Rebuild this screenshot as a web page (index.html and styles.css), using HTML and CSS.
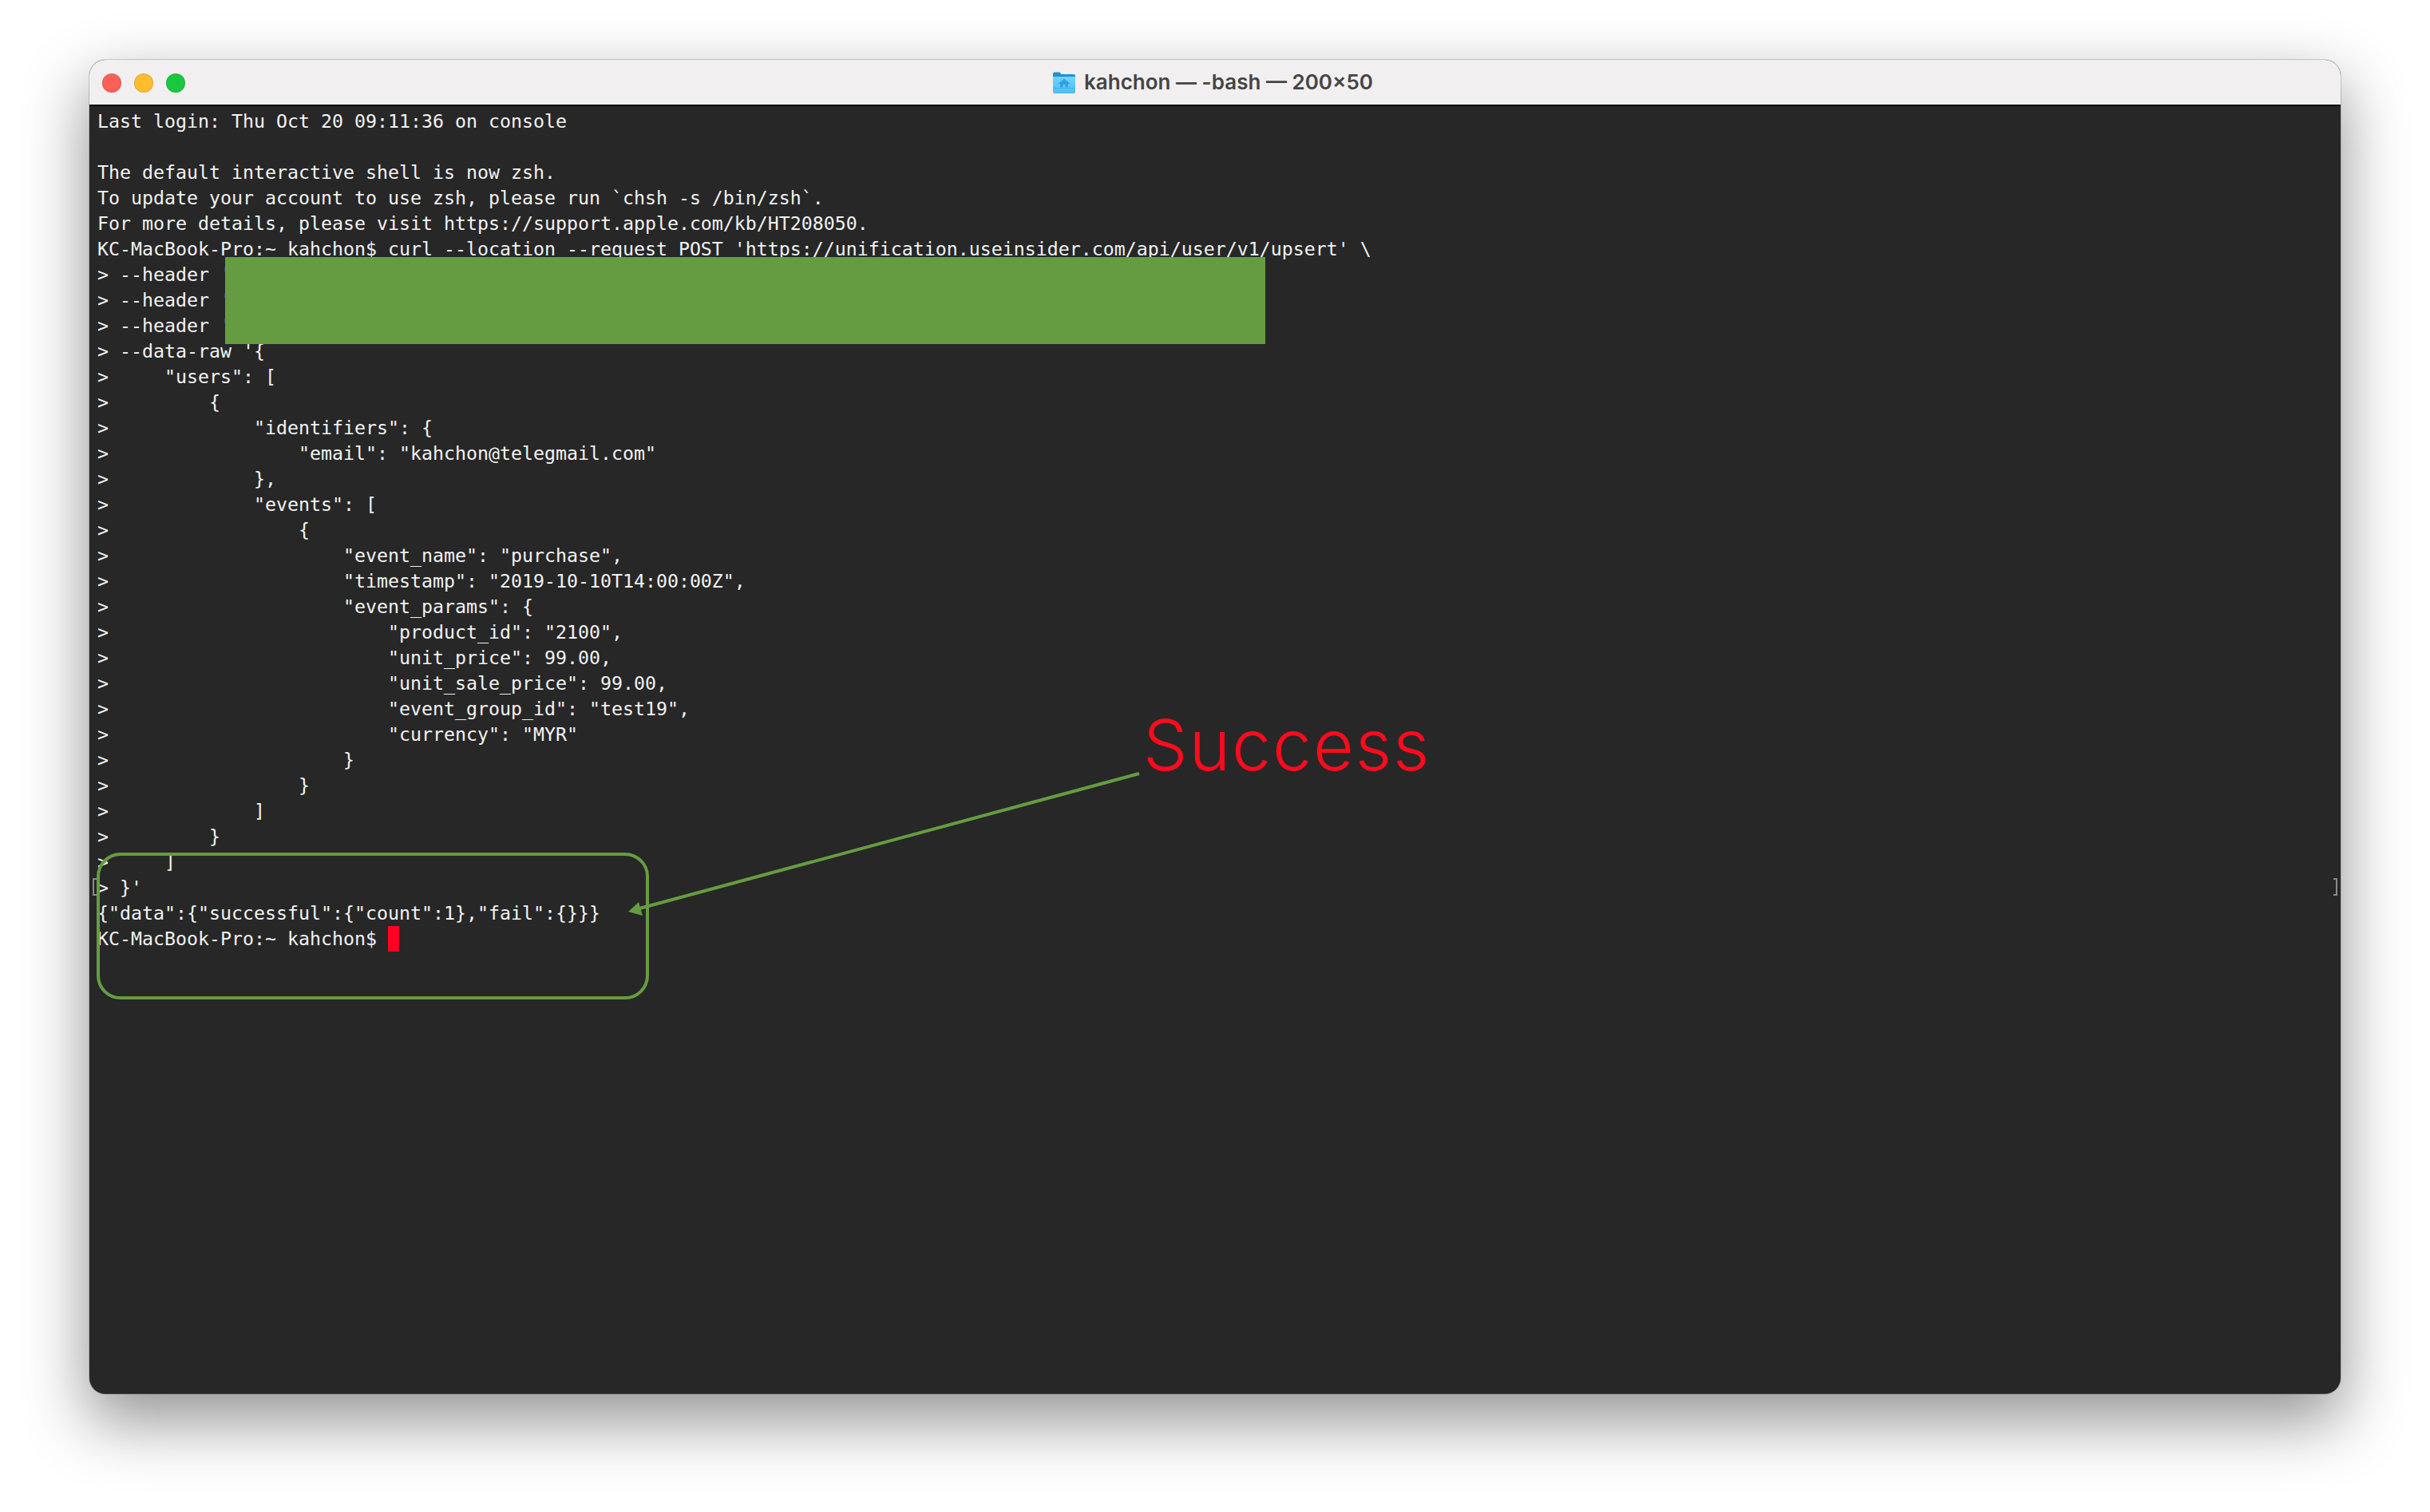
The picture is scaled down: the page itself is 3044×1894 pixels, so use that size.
FILE: index.html
```html
<!DOCTYPE html>
<html lang="en">
<head>
<meta charset="utf-8">
<title>kahchon — -bash — 200×50</title>
<link rel="stylesheet" href="styles.css">
</head>
<body>
<main class="window">
  <header class="titlebar">
    <div class="lights">
      <span class="light red"></span>
      <span class="light yellow"></span>
      <span class="light green"></span>
    </div>
    <div class="title">
      <svg class="folder" viewBox="0 0 28 27" aria-hidden="true">
        <defs>
          <linearGradient id="folderFill" x1="0" y1="0" x2="0" y2="1">
            <stop offset="0" stop-color="#74d3fb"/>
            <stop offset="1" stop-color="#4fbcf2"/>
          </linearGradient>
        </defs>
        <path d="M0 2.500a2 2 0 0 1 2-2h6.500l2 2.500H26a2 2 0 0 1 2 2V8H0z" fill="#1d8fdc"/>
        <path d="M0 6h28v19a2 2 0 0 1-2 2H2a2 2 0 0 1-2-2z" fill="url(#folderFill)"/>
        <path d="M0 20.500h28" stroke="#3fb2ec" stroke-width="1"/>
        <path d="M14 8.500l-7.500 6.500h2.500v4.500h3.500v-3.500h3v3.500H19V15h2.500z" fill="#2aa3e6"/>
      </svg>
      <span class="title-text">kahchon — -bash — 200×50</span>
    </div>
  </header>
  <section class="terminal">
<pre class="output">Last login: Thu Oct 20 09:11:36 on console

The default interactive shell is now zsh.
To update your account to use zsh, please run `chsh -s /bin/zsh`.
For more details, please visit https://support.apple.com/kb/HT208050.
KC-MacBook-Pro:~ kahchon$ curl --location --request POST 'https://unification.useinsider.com/api/user/v1/upsert' \
&gt; --header '
&gt; --header '
&gt; --header '
&gt; --data-raw '{
&gt;     "users": [
&gt;         {
&gt;             "identifiers": {
&gt;                 "email": "kahchon@telegmail.com"
&gt;             },
&gt;             "events": [
&gt;                 {
&gt;                     "event_name": "purchase",
&gt;                     "timestamp": "2019-10-10T14:00:00Z",
&gt;                     "event_params": {
&gt;                         "product_id": "2100",
&gt;                         "unit_price": 99.00,
&gt;                         "unit_sale_price": 99.00,
&gt;                         "event_group_id": "test19",
&gt;                         "currency": "MYR"
&gt;                     }
&gt;                 }
&gt;             ]
&gt;         }
&gt;     ]
&gt; }'
{"data":{"successful":{"count":1},"fail":{}}}
KC-MacBook-Pro:~ kahchon$ <span class="cursor"> </span></pre>
    <span class="mark mark-left"></span>
    <span class="mark mark-right"></span>
    <div class="redaction"></div>
    <div class="callout-box"></div>
    <svg class="arrow" viewBox="0 0 660 190" aria-hidden="true">
      <path d="M645 2 L19 171" stroke="#669c41" stroke-width="4" fill="none"/>
      <path d="M5 175 L18 163 L23 180 Z" fill="#669c41"/>
    </svg>
    <span class="success">Success</span>
  </section>
</main>
</body>
</html>
```
FILE: styles.css
```css
* { box-sizing: border-box; }
html, body { margin: 0; height: 100%; background: #fff; }
body { padding: 75px 112px 148px; overflow: hidden; }

.window {
  height: 1671px;
  display: flex;
  flex-direction: column;
  border-radius: 20px;
  overflow: visible;
  background: #272727;
  box-shadow: 0 32px 80px 3px rgba(0, 0, 0, .42), 0 0 0 1px rgba(0, 0, 0, .16);
}

.titlebar {
  position: relative;
  height: 58px;
  flex: none;
  display: flex;
  align-items: center;
  justify-content: center;
  background: #f1eff0;
  border-radius: 20px 20px 0 0;
  border-bottom: 2px solid #000;
}
.lights {
  position: absolute;
  left: 16px;
  top: 17px;
  display: flex;
  gap: 16px;
}
.light { width: 24px; height: 24px; border-radius: 50%; border: 1px solid rgba(0, 0, 0, .1); }
.red { background: #fe5f57; }
.yellow { background: #febc2e; }
.green { background: #1ac840; }

.title { display: flex; align-items: center; gap: 11px; margin-right: 5px; }
.folder { width: 28px; height: 27px; display: block; }
.title-text {
  font-family: Inter, "Liberation Sans", sans-serif;
  font-weight: 600;
  font-size: 26px;
  line-height: 30px;
  color: #454545;
}

.terminal {
  position: relative;
  flex: 1;
  padding: 3px 0 0 10px;
  border-radius: 0 0 20px 20px;
}
.output {
  margin: 0;
  font-family: "DejaVu Sans Mono", monospace;
  font-size: 23.25px;
  line-height: 32px;
  color: #f2f2f2;
}
.cursor { display: inline-block; width: 14px; height: 32px; vertical-align: top; background: #ff0022; }

.mark {
  position: absolute;
  top: 967px;
  width: 5px;
  height: 22px;
  border: 2px solid #8a8a8a;
}
.mark-left { left: 4px; border-right: 0; }
.mark-right { right: 4px; border-left: 0; }

.redaction {
  position: absolute;
  left: 170px;
  top: 189px;
  width: 1303px;
  height: 109px;
  background: #669c41;
}
.callout-box {
  position: absolute;
  left: 9px;
  top: 935px;
  width: 692px;
  height: 184px;
  border: 4px solid #669c41;
  border-radius: 30px;
}
.arrow {
  position: absolute;
  left: 670px;
  top: 834px;
  width: 660px;
  height: 190px;
}
.success {
  position: absolute;
  left: 1320px;
  top: 745px;
  font-family: Inter, "Liberation Sans", sans-serif;
  font-weight: 300;
  font-size: 88px;
  letter-spacing: 1.8px;
  line-height: 110px;
  color: #ff0a1e;
}
```
